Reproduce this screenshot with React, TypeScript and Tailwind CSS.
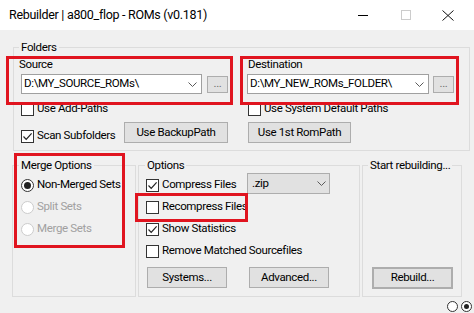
import React from "react";

const FONT = "font-['Roboto','Liberation_Sans',sans-serif]";

function Chevron() {
  return (
    <svg width="9" height="5" viewBox="0 0 9 5" className="shrink-0">
      <path d="M0.5 0.5 L4.5 4.5 L8.5 0.5" stroke="#5a5a5a" strokeWidth="1" fill="none" />
    </svg>
  );
}

function Check({ checked, label }: { checked?: boolean; label: string }) {
  return (
    <div className="flex items-center h-[14px] whitespace-nowrap">
      <span className="w-[13px] h-[13px] border border-[#333333] bg-white flex items-center justify-center shrink-0">
        {checked && (
          <svg width="11" height="11" viewBox="0 0 11 11">
            <path d="M1.5 5.5 L4.2 8.3 L9.6 2.4" stroke="#222222" strokeWidth="1.2" fill="none" />
          </svg>
        )}
      </span>
      <span className="ml-[3px]">{label}</span>
    </div>
  );
}

function Radio({ on, disabled, label }: { on?: boolean; disabled?: boolean; label: string }) {
  return (
    <div className={`flex items-center h-[14px] whitespace-nowrap ${disabled ? "text-[#a0a0a0]" : ""}`}>
      <span
        className={`w-[13px] h-[13px] rounded-full border bg-white flex items-center justify-center shrink-0 ${
          disabled ? "border-[#cccccc]" : "border-[#333333]"
        }`}
      >
        {on && <span className="w-[7px] h-[7px] rounded-full bg-[#222222]" />}
      </span>
      <span className="ml-[3px]">{label}</span>
    </div>
  );
}

function Btn({ children, className = "" }: { children: React.ReactNode; className?: string }) {
  return (
    <button className={`flex items-center justify-center bg-[#e1e1e1] border border-[#adadad] leading-none whitespace-nowrap ${className}`}>
      {children}
    </button>
  );
}

function PathCombo({ value, width }: { value: string; width: string }) {
  return (
    <div className={`flex items-center h-[20px] bg-white border border-[#a0a0a0] pl-[2px] pr-[4px] ${width}`}>
      <span className="flex-1 whitespace-nowrap overflow-hidden">{value}</span>
      <Chevron />
    </div>
  );
}

function Group({ title, legendMl, className = "", children }: { title: string; legendMl: string; className?: string; children: React.ReactNode }) {
  return (
    <fieldset className={`border border-[#dcdcdc] ${className}`}>
      <legend className={`px-[2px] leading-[14px] whitespace-nowrap ${legendMl}`}>{title}</legend>
      {children}
    </fieldset>
  );
}

function RedBox({ className }: { className: string }) {
  return <div className={`absolute border-[3px] border-[#e0141f] pointer-events-none ${className}`} />;
}

export default function App() {
  return (
    <div className={`relative w-[474px] h-[313px] overflow-hidden bg-[#f0f0f0] text-[11.5px] tracking-[-0.35px] text-black ${FONT}`}>
      {/* title bar */}
      <div className="h-[30px] bg-white flex items-center">
        <span className="pl-[9px] text-[12.5px] tracking-[-0.3px] flex-1 whitespace-nowrap">Rebuilder | a800_flop - ROMs (v0.181)</span>
        <div className="flex items-center h-full">
          <div className="w-[10px] h-px bg-black mr-[33px]" />
          <div className="w-[10px] h-[10px] border border-[#cccccc] mr-[31px]" />
          <svg width="12" height="11" viewBox="0 0 12 11" className="mr-[20px]">
            <path d="M0.5 0.5 L11.5 10.5 M11.5 0.5 L0.5 10.5" stroke="#111111" strokeWidth="1" />
          </svg>
        </div>
      </div>

      {/* body */}
      <div className="pt-[10px]">
        <Group title="Folders" legendMl="ml-[5px]" className="ml-[13px] w-[457px] h-[111px]">
          <div className="flex pl-[7px]">
            <div className="w-[226px] flex flex-col">
              <span className="leading-[14px] mt-[3px] -ml-[2px]">Source</span>
              <div className="flex items-center mt-[3px]">
                <PathCombo value="D:\MY_SOURCE_ROMs\" width="w-[181px]" />
                <Btn className="ml-[5px] w-[21px] h-[17px] text-[#6d6d6d]">...</Btn>
              </div>
              <div className="mt-[8px]">
                <Check label="Use Add-Paths" />
              </div>
              <div className="flex items-end mt-[6px]">
                <div className="w-[103px]">
                  <Check checked label="Scan Subfolders" />
                </div>
                <Btn className="w-[104px] h-[21px]">Use BackupPath</Btn>
              </div>
            </div>
            <div className="flex flex-col">
              <span className="leading-[14px] mt-[3px] ml-[1px]">Destination</span>
              <div className="flex items-center mt-[3px]">
                <PathCombo value="D:\MY_NEW_ROMs_FOLDER\" width="w-[182px]" />
                <Btn className="ml-[4px] w-[21px] h-[17px] text-[#6d6d6d]">...</Btn>
              </div>
              <div className="mt-[8px] ml-[1px]">
                <Check label="Use System Default Paths" />
              </div>
              <Btn className="mt-[6px] ml-[1px] w-[103px] h-[21px]">Use 1st RomPath</Btn>
            </div>
          </div>
        </Group>

        <div className="flex mt-[7px] ml-[12px] gap-[2px] h-[139px]">
          <Group title="Merge Options" legendMl="ml-[6px]" className="w-[124px]">
            <div className="flex flex-col gap-[8px] mt-[6px] pl-[8px]">
              <Radio on label="Non-Merged Sets" />
              <Radio disabled label="Split Sets" />
              <Radio disabled label="Merge Sets" />
            </div>
          </Group>

          <Group title="Options" legendMl="ml-[6px]" className="w-[222px]">
            <div className="flex flex-col mt-[2px] pl-[7px]">
              <div className="flex items-center h-[22px]">
                <div className="w-[101px]">
                  <Check checked label="Compress Files" />
                </div>
                <div className="flex items-center w-[83px] h-[21px] -mt-[3px] bg-[#e1e1e1] border border-[#adadad] pl-[4px] pr-[3px]">
                  <span className="flex-1">.zip</span>
                  <Chevron />
                </div>
              </div>
              <div className="flex items-center h-[22px]">
                <Check label="Recompress Files" />
              </div>
              <div className="flex items-center h-[22px]">
                <Check checked label="Show Statistics" />
              </div>
              <div className="flex items-center h-[22px]">
                <Check label="Remove Matched Sourcefiles" />
              </div>
              <div className="flex mt-[5px] ml-[1px] gap-[22px]">
                <Btn className="w-[80px] h-[21px]">Systems...</Btn>
                <Btn className="w-[80px] h-[21px]">Advanced...</Btn>
              </div>
            </div>
          </Group>

          <Group title="Start rebuilding..." legendMl="ml-[5px]" className="w-[100px]">
            <div className="pl-[9px] pt-[95px]">
              <Btn className="w-[81px] h-[22px] border-2 border-[#0078d7]">Rebuild...</Btn>
            </div>
          </Group>
        </div>

        {/* status strip */}
        <div className="flex justify-end items-center h-[16px] pr-[2px] gap-[3px] pt-[2px]">
          <span className="w-[11px] h-[11px] rounded-full border border-[#333333] bg-white" />
          <span className="w-[11px] h-[11px] rounded-full border border-[#333333] bg-white flex items-center justify-center">
            <span className="w-[5px] h-[5px] rounded-full bg-[#222222]" />
          </span>
        </div>
      </div>

      {/* red annotation boxes */}
      <RedBox className="left-[6px] top-[56px] w-[227px] h-[49px]" />
      <RedBox className="left-[240px] top-[56px] w-[219px] h-[49px]" />
      <RedBox className="left-[14px] top-[153px] w-[111px] h-[95px]" />
      <RedBox className="left-[135px] top-[193px] w-[113px] h-[29px]" />
    </div>
  );
}
